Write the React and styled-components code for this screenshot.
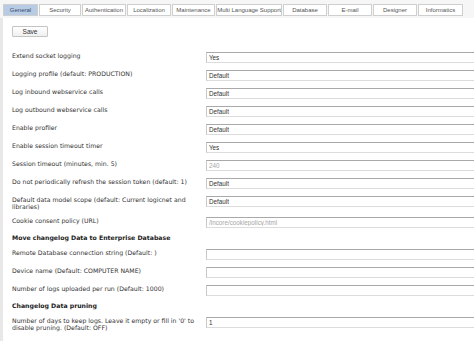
import React from 'react';
import styled, { createGlobalStyle } from 'styled-components';

const GlobalStyle = createGlobalStyle`
  html, body {
    margin: 0;
    padding: 0;
    background: #ffffff;
    overflow: hidden;
  }
`;

const Page = styled.div`
  width: 474px;
  height: 341px;
  overflow: hidden;
  font-family: 'DejaVu Sans', Verdana, sans-serif;
`;

const TabBar = styled.div`
  display: flex;
  gap: 1px;
  padding: 4px 0 0 3px;
  height: 14px;
  background: #f6f6f6;
`;

const Tab = styled.div`
  box-sizing: border-box;
  width: ${p => p.w}px;
  height: 12px;
  flex: none;
  border: 1px solid #cfcfcf;
  background: ${p => (p.active ? '#b7cbe5' : '#ffffff')};
  color: ${p => (p.active ? '#3a4a66' : '#555')};
  font-family: 'Liberation Sans', Arial, sans-serif;
  font-size: 6px;
  line-height: 10px;
  text-align: center;
  white-space: nowrap;
  overflow: hidden;
`;

const Panel = styled.div`
  border-left: 3px solid #e8e8e8;
  padding: 8px 0 0 9px;
  min-height: 330px;
`;

const SaveButton = styled.button`
  box-sizing: border-box;
  width: 36px;
  height: 11px;
  padding: 0;
  border: 1px solid #c4c4c4;
  border-radius: 1px;
  background: linear-gradient(#ffffff, #f0f0f0);
  color: #333;
  font-family: 'Liberation Sans', Arial, sans-serif;
  font-size: 6.6px;
  line-height: 9px;
  margin-bottom: 15px;
  display: block;
`;

const Form = styled.div`
  display: flex;
  flex-direction: column;
  gap: 7px;
`;

const Row = styled.div`
  display: flex;
  align-items: flex-start;
`;

const Label = styled.div`
  width: 194px;
  flex: none;
  padding-right: 4px;
  box-sizing: border-box;
  font-size: 6.2px;
  line-height: 7px;
  color: #333;
`;

const Heading = styled.div`
  font-size: 6.2px;
  line-height: 7px;
  font-weight: bold;
  color: #222;
  margin-top: -1px;
  margin-bottom: 1px;
`;

const Field = styled.input`
  box-sizing: border-box;
  width: 300px;
  height: 11px;
  flex: none;
  margin: 0;
  padding: 0 2px;
  border: 1px solid #c8c8c8;
  border-top-color: #a9a9a9;
  border-bottom-color: #dcdcdc;
  background: #fff;
  color: ${p => (p.disabled ? '#a6a6a6' : '#333')};
  font-family: 'Liberation Sans', Arial, sans-serif;
  font-size: 6.3px;
  outline: none;
`;

const tabs = [
  ['General', 35],
  ['Security', 42],
  ['Authentication', 44],
  ['Localization', 44],
  ['Maintenance', 43],
  ['Multi Language Support', 66],
  ['Database', 44],
  ['E-mail', 44],
  ['Designer', 44],
  ['Informatics', 45],
];

const rows = [
  { label: 'Extend socket logging', value: 'Yes' },
  { label: 'Logging profile (default: PRODUCTION)', value: 'Default' },
  { label: 'Log inbound webservice calls', value: 'Default' },
  { label: 'Log outbound webservice calls', value: 'Default' },
  { label: 'Enable profiler', value: 'Default' },
  { label: 'Enable session timeout timer', value: 'Yes' },
  { label: 'Session timeout (minutes, min. 5)', value: '240', disabled: true },
  { label: 'Do not periodically refresh the session token (default: 1)', value: 'Default' },
  { label: 'Default data model scope (default: Current logicnet and libraries)', value: 'Default' },
  { label: 'Cookie consent policy (URL)', value: '/lncore/cookiepolicy.html', disabled: true },
  { heading: 'Move changelog Data to Enterprise Database' },
  { label: 'Remote Database connection string (Default: )', value: '' },
  { label: 'Device name (Default: COMPUTER NAME)', value: '' },
  { label: 'Number of logs uploaded per run (Default: 1000)', value: '' },
  { heading: 'Changelog Data pruning' },
  { label: "Number of days to keep logs. Leave it empty or fill in '0' to disable pruning. (Default: OFF)", value: '1' },
];

export default function App() {
  return (
    <Page>
      <GlobalStyle />
      <TabBar>
        {tabs.map(([name, w], i) => (
          <Tab key={name} w={w} active={i === 0}>{name}</Tab>
        ))}
      </TabBar>
      <Panel>
        <SaveButton>Save</SaveButton>
        <Form>
          {rows.map((r, i) =>
            r.heading ? (
              <Heading key={i}>{r.heading}</Heading>
            ) : (
              <Row key={i}>
                <Label>{r.label}</Label>
                <Field readOnly defaultValue={r.value} disabled={r.disabled} />
              </Row>
            )
          )}
        </Form>
      </Panel>
    </Page>
  );
}
